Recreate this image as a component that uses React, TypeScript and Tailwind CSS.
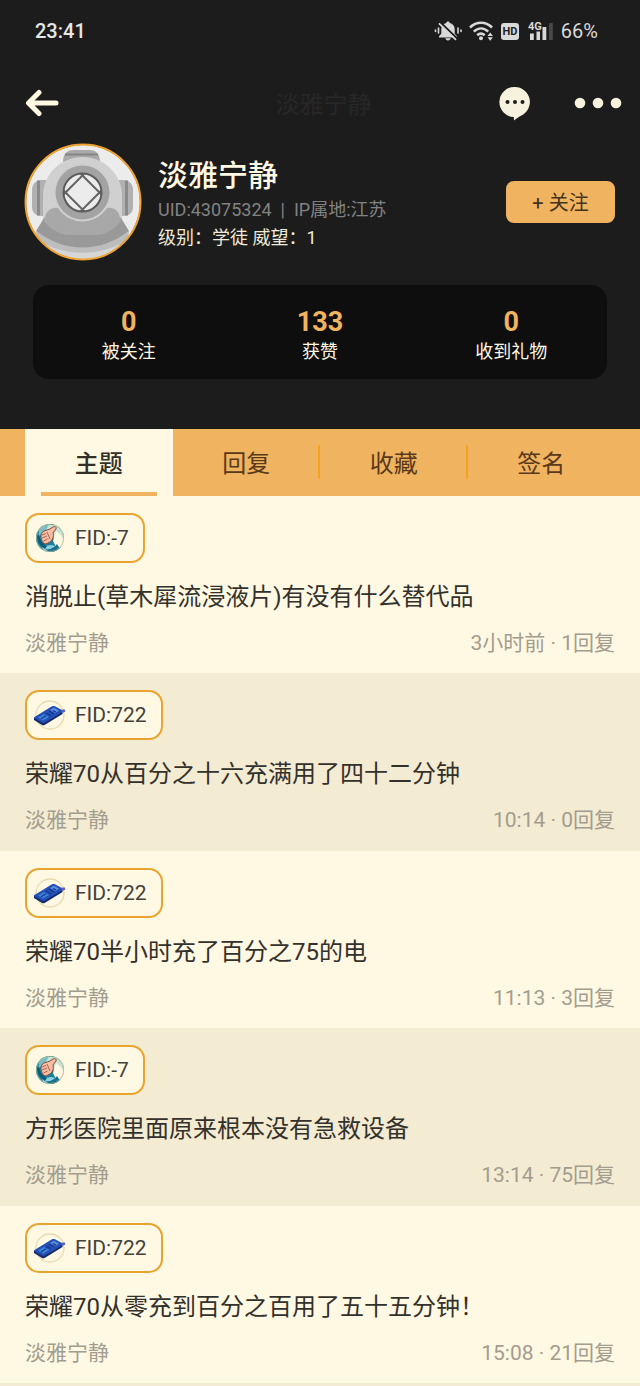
import React from "react";

const font = "font-['Roboto','Noto_Sans_CJK_SC',sans-serif]";

function StatusIcons() {
  return (
    <div className="flex items-center gap-[7px] text-[#d9d9d9]">
      <svg width="28" height="22" viewBox="0 0 28 22" fill="currentColor" aria-hidden="true">
        <path d="M14 1.500c1 0 1.600.6 1.700 1.400 3 .7 5 3.100 5 6.300v4.600l2.300 2.400v1.300H5v-1.300l2.300-2.400V9.200c0-3.200 2-5.600 5-6.300.1-.8.700-1.400 1.700-1.400zM11.300 18.300h5.400c-.2 1.200-1.200 2.200-2.700 2.200s-2.500-1-2.700-2.200z" />
        <path d="M7 3l16 15.500" stroke="#1c1c1c" strokeWidth="2" />
        <path d="M5.500 3.800l16 15.500" stroke="currentColor" strokeWidth="1.800" strokeLinecap="round" />
        <path d="M4.500 8v5M24 8v5M1.500 10v1.500M27 10v1.500" stroke="currentColor" strokeWidth="1.600" strokeLinecap="round" />
      </svg>
      <svg width="25" height="20" viewBox="0 0 25 20" fill="none" stroke="currentColor" strokeWidth="2.600" aria-hidden="true">
        <path d="M1 6.500C7.500.2 16.500.2 23 6.500M4.800 10.600c4.500-4.200 10-4.200 14.400 0M8.200 14.300c2.300-2 5.200-2 7.500 0" />
        <circle cx="12" cy="17.300" r="2" fill="currentColor" stroke="none" />
        <path d="M18.500 15l2.700-3.500 2.700 3.500zM18.500 16.300l2.700 3.500 2.700-3.500z" fill="currentColor" stroke="none" />
      </svg>
      <span className="flex h-[17px] w-[18px] items-center justify-center rounded-[3px] bg-[#d9d9d9] text-[11px] font-bold leading-none text-[#1c1c1c]">HD</span>
      <svg className="ml-[2px]" width="26" height="20" viewBox="0 0 26 20" fill="currentColor" aria-hidden="true">
        <text x="0" y="8.500" fontSize="11" fontWeight="700">4G</text>
        <path d="M2 12.500h3.800V19H2zM8.500 10.500h3.500V19H8.500zM14.500 6h3.800v13h-3.800z" />
        <path d="M21 2h3.800v17H21z" fill="#484848" />
      </svg>
      <span className="text-xl leading-6">66%</span>
    </div>
  );
}

function Avatar() {
  return (
    <svg className="size-[118px] shrink-0" viewBox="0 0 118 118" role="img" aria-label="头像">
      <defs>
        <clipPath id="face"><circle cx="59" cy="59" r="57" /></clipPath>
        <clipPath id="glass"><circle cx="58.500" cy="49.500" r="19" /></clipPath>
      </defs>
      <g clipPath="url(#face)">
        <path d="M0 0h118v118H0z" fill="#ececec" />
        <path d="M39 19c0-8 4-12 10-12h17c6 0 10 4 10 12z" fill="#a9a9a9" />
        <path d="M41 11.500h33" stroke="#858585" strokeWidth="2" />
        <path d="M22 37h-4c-6 0-10 4-10 10v17c0 6 4 9 10 9h6z" fill="#b0b0b0" />
        <path d="M14.500 37.500v35" stroke="#8a8a8a" strokeWidth="3" />
        <path d="M95 37h4c6 0 10 4 10 10v17c0 6-4 9-10 9h-6z" fill="#b0b0b0" />
        <path d="M102.500 37.500v35" stroke="#8a8a8a" strokeWidth="3" />
        <path d="M10 91c30 23 67 23 97 0v27H10z" fill="#d6d6d6" />
        <path d="M12 88c30 20 63 20 93 0l-1 9c-28 17-63 17-91 0z" fill="#bdbdbd" />
        <path d="M58.500 14C80 14 98 31 98 53v27H19V53C19 31 37 14 58.500 14z" fill="#d0d0d0" />
        <path d="M20 75l-8 13c29 22 64 22 93 0l-8-13z" fill="#999" />
        <path d="M20 78l2-7c4-8 14-8 20-2 10 9 23 9 33 0 6-6 16-6 20 2l2 7c-8 10-17 14-26 14H46c-9 0-18-4-26-14z" fill="#a8a8a8" />
        <circle cx="58.500" cy="49.500" r="29" fill="#cfcfcf" />
        <circle cx="58.500" cy="49.500" r="27" fill="#a3a3a3" />
        <circle cx="58.500" cy="49.500" r="19" fill="#ececec" />
        <g clipPath="url(#glass)" stroke="#646464" strokeWidth="2">
          <path d="M66 25L34 57M51 25l32 32M34 42l32 32M83 42L51 74" />
        </g>
        <circle cx="58.500" cy="49.500" r="19" fill="none" stroke="#5c5c5c" strokeWidth="2" />
      </g>
      <circle cx="59" cy="59" r="57.500" fill="none" stroke="#efa32f" strokeWidth="2" />
    </svg>
  );
}

function ThumbIcon() {
  return (
    <svg width="32" height="30" viewBox="-2 0 32 30" aria-hidden="true">
      <defs><clipPath id="disc"><circle cx="14" cy="15" r="14" /></clipPath></defs>
      <g clipPath="url(#disc)">
        <path d="M0 0h32v30H0z" fill="#17809a" />
        <path d="M5 2h18l6 9v14l-8-4-6-10z" fill="#c9e3d4" />
        <path d="M20 8c5 3 8 8 9 14l-8 4-4-8z" fill="#fff8e3" />
        <path d="M4 3l10-3-5 8-7 6z" fill="#73bfc4" />
        <path d="M5 21c3 2 6 2 10 1l9 2-7 5H8z" fill="#8fd3e2" />
        <path d="M9 26c5 1 9-1 12-5l3 5-8 5z" fill="#15718d" />
        <path d="M1 12c0 6 3 11 8 14l2-3c-4-2-7-5-8-11z" fill="#075e78" />
      </g>
      <path d="M5 13c0-2 1-4 3-5l6-2 3-2c2-1 4 0 3 2l-3 4c1 3 0 7-3 9l-4 2c-3 0-5-4-5-8z" fill="#f4bfa0" stroke="#8f4a43" strokeWidth="1" />
      <path d="M6 12l4-1.500M6 15l5-2M7.500 18l4-2M11 9l3 7" stroke="#a95650" strokeWidth=".9" />
      <circle cx="14" cy="15" r="13.600" fill="none" stroke="#b9b48b" strokeWidth=".7" />
    </svg>
  );
}

function PhoneIcon() {
  return (
    <svg width="32" height="30" viewBox="0 0 32 30" aria-hidden="true">
      <circle cx="16" cy="15" r="14" fill="#fff8e3" stroke="#ead9b0" strokeWidth="1.300" />
      <path d="M0 17.500V20l8 5c1 .5 2 .3 3-.3L28.500 14v-3z" fill="#142a6e" />
      <path d="M.5 17L18 6.300c1-.5 2-.5 3 0l7.500 4c.7.500.6 1.300 0 1.700L11 22.500c-1 .6-2 .5-3 0L.5 18.200c-.6-.4-.6-.8 0-1.200z" fill="#2450b5" />
      <path d="M4 17.500l6-3.500 5 3-6 3.500z" fill="#3d83dc" />
      <path d="M16 10l4-2.300 5 3-4 2.300z" fill="#5b8fe0" />
      <path d="M7 18.800l5-3M12 13l5 3M15 11l5 3M19 10.500l3 1.500" stroke="#163586" strokeWidth="1.200" />
      <path d="M27 10l3.500-.8 1 2.300-3 1.300z" fill="#5661ba" />
    </svg>
  );
}

const stats = [
  { value: "0", label: "被关注" },
  { value: "133", label: "获赞" },
  { value: "0", label: "收到礼物" },
];

const tabs = ["主题", "回复", "收藏", "签名"];

const posts = [
  { fid: "-7", title: "消脱止(草木犀流浸液片)有没有什么替代品", meta: "3小时前 · 1回复" },
  { fid: "722", title: "荣耀70从百分之十六充满用了四十二分钟", meta: "10:14 · 0回复" },
  { fid: "722", title: "荣耀70半小时充了百分之75的电", meta: "11:13 · 3回复" },
  { fid: "-7", title: "方形医院里面原来根本没有急救设备", meta: "13:14 · 75回复" },
  { fid: "722", title: "荣耀70从零充到百分之百用了五十五分钟！", meta: "15:08 · 21回复" },
];

export default function App() {
  return (
    <div className={`min-h-screen bg-[#f3ebd2] ${font}`}>
      <header className="bg-[#1c1c1c] pb-[50px]">
        <div className="flex h-[62px] items-center justify-between pl-[35px] pr-[42px]">
          <span className="text-xl font-medium leading-6 text-[#e6e6e6]">23:41</span>
          <StatusIcons />
        </div>
        <div className="grid h-[81px] grid-cols-[1fr_auto_1fr] items-center pl-[25px] pr-[18px]">
          <button aria-label="返回" className="justify-self-start">
            <svg width="34" height="28" viewBox="0 0 34 28" fill="none" stroke="#fff8e3" strokeWidth="5" strokeLinecap="round" strokeLinejoin="round" aria-hidden="true">
              <path d="M31 14H4M14 3.500L3.500 14 14 24.500" />
            </svg>
          </button>
          <span className="pt-1 text-2xl text-[#272727]">淡雅宁静</span>
          <div className="flex items-center gap-[43px] justify-self-end">
            <button aria-label="消息">
              <svg width="32" height="36" viewBox="0 0 32 36" aria-hidden="true">
                <path d="M16 2a15 15 0 0 1 6 28.700C19.500 32 17 34 15 35.500L14.800 32A15 15 0 0 1 16 2z" fill="#f7f2de" />
                <g fill="#1c1c1c"><circle cx="8.500" cy="17" r="2" /><circle cx="16" cy="17" r="2" /><circle cx="23.500" cy="17" r="2" /></g>
              </svg>
            </button>
            <button aria-label="更多">
              <svg width="48" height="12" viewBox="0 0 48 12" fill="#f7f2de" aria-hidden="true">
                <circle cx="6" cy="6" r="5.300" /><circle cx="24" cy="6" r="5.300" /><circle cx="42" cy="6" r="5.300" />
              </svg>
            </button>
          </div>
        </div>
        <section className="flex items-center pl-6 pr-[25px]">
          <Avatar />
          <div className="ml-4 flex-1 pt-1">
            <h1 className="text-3xl font-medium leading-10 text-[#fff8e3]">淡雅宁静</h1>
            <p className="text-lg leading-7 text-[#828282]">UID:43075324&nbsp; |&nbsp; IP属地:江苏</p>
            <p className="text-lg leading-7 text-[#f0ead8]">级别：学徒 威望：1</p>
          </div>
          <button className="h-[42px] w-[109px] rounded-lg bg-[#f0b35f] pt-[2px] text-xl text-[#44341c]">+ 关注</button>
        </section>
        <dl className="mx-[33px] mt-6 grid h-[94px] grid-cols-3 items-center rounded-2xl bg-[#0e0e0e] pt-2 text-center">
          {stats.map((s) => (
            <div key={s.label} className="flex flex-col-reverse">
              <dt className="text-lg leading-7 text-[#fff8e3]">{s.label}</dt>
              <dd className="text-[27px] font-bold leading-8 text-[#f0b35f]">{s.value}</dd>
            </div>
          ))}
        </dl>
      </header>
      <nav className="grid h-[67px] grid-cols-4 bg-[#f0b35f] px-[25px]">
        {tabs.map((t, i) => (
          <button
            key={t}
            className={
              i === 0
                ? "relative bg-[#fff8e3] pt-[2px] text-2xl font-medium text-[#333027] after:absolute after:inset-x-4 after:bottom-0 after:h-1 after:bg-[#f0b35f]"
                : i < 3
                  ? "relative pt-[2px] text-2xl text-[#59391a] after:absolute after:right-0 after:top-4 after:h-[34px] after:w-[2px] after:bg-[#f5a31d]"
                  : "pt-[2px] text-2xl text-[#59391a]"
            }
          >
            {t}
          </button>
        ))}
      </nav>
      <main>
        {posts.map((p) => (
          <article key={p.title} className="bg-[#fff8e3] px-[25px] pb-4 pt-[17px] even:bg-[#f3ebd2] even:pb-[17px]">
            <a href="#forum" className="flex h-[50px] w-fit items-center gap-[9px] rounded-[14px] border-2 border-[#e9a42f] bg-[#fff8e3] pl-[7px] pr-[14px] text-[21px] text-[#45413a]">
              {p.fid === "722" ? <PhoneIcon /> : <ThumbIcon />}
              <span className="pt-[2px]">FID:{p.fid}</span>
            </a>
            <h2 className="mt-4 text-2xl leading-9 text-[#33312c]">{p.title}</h2>
            <div className="mt-[14px] flex justify-between text-[21px] leading-7 text-[#a39d8f]">
              <span>淡雅宁静</span>
              <span>{p.meta}</span>
            </div>
          </article>
        ))}
      </main>
    </div>
  );
}
